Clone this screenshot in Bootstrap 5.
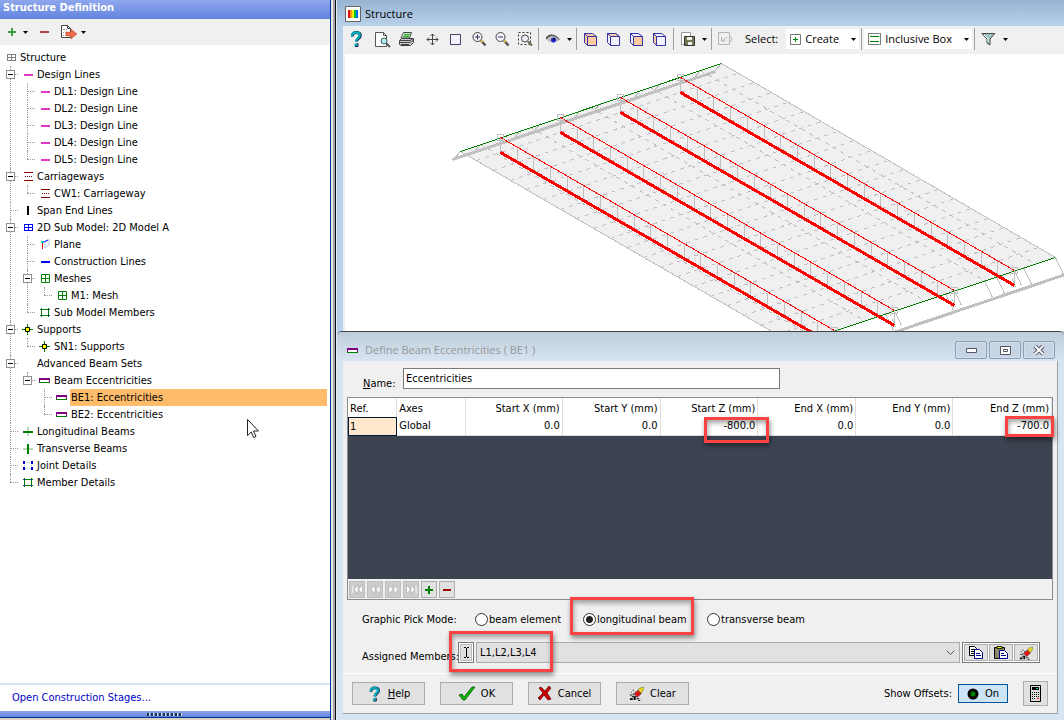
<!DOCTYPE html>
<html lang="en">
<head>
<meta charset="utf-8">
<meta name="viewport" content="width=device-width, initial-scale=1">
<title>Structure</title>
<link href="https://cdn.jsdelivr.net/npm/bootstrap@5.3.0/dist/css/bootstrap.min.css" rel="stylesheet">
<style>
  :root { --ui: "DejaVu Sans Condensed", "Liberation Sans", sans-serif; --title: "Open Sans", "Noto Sans", sans-serif; }
  body { font: 11px/17px var(--ui); color: #000; background: #f0f0f0; overflow: hidden; }
  button, input, select { font: inherit; color: inherit; border-radius: 0; }
  svg { display: block; flex: none; }

  /* definition pane */
  .def-pane { flex: 0 0 331px; background: #fff; border-right: 1px solid #039; }
  .def-title { height: 19px; padding: 0 3px; font-size: 11px; line-height: 15px; font-weight: 700; color: #fff; background: linear-gradient(#8ea6ec, #6384e0); margin: 0; }
  .def-tools { height: 26px; background: #f0f0f0; padding-left: 5px; }
  .flat { border: 0; background: none; padding: 0; display: flex; align-items: center; justify-content: center; }
  .tree, .tree ul { list-style: none; margin: 0; padding: 0; }
  .tree { padding: 4px 3px 0 2px; }
  .tree li li { position: relative; padding-left: 17px; }
  .node { display: flex; height: 17px; }
  .node > span { flex: 1; padding-left: 1px; white-space: nowrap; }
  .node.chosen > span { background: #ffbd6b; }
  .tree li li::before { content: ""; position: absolute; left: 8px; top: 0; bottom: 0; border-left: 1px dotted #999; }
  .tree li li:last-child::before { bottom: auto; height: 8px; }
  .tree li li::after { content: ""; position: absolute; left: 8px; top: 8px; width: 8px; border-top: 1px dotted #999; }
  .twist { position: absolute; z-index: 1; left: 4px; top: 4px; width: 9px; height: 9px; padding: 0; border: 1px solid #919191; background: linear-gradient(#000, #000) center / 5px 1px no-repeat #fff; }
  .pointer { position: absolute; left: 247px; top: 419px; z-index: 3; }
  .stages { border-top: 2px solid #d7e4f2; height: 28px; padding: 4px 12px; }
  .stages a { color: #0000c8; text-decoration: none; }
  .grip { height: 7px; border-bottom: 1px solid #039; background: linear-gradient(#8ea6ec, #6384e0); }
  .grip i { width: 36px; height: 3px; background: repeating-linear-gradient(90deg, #234 0 2px, #cdf 2px 3px, transparent 3px 4px); }
  .under { height: 2px; background: #e0d3bd; }
  .divider { flex: 0 0 6px; background: linear-gradient(90deg, #e9e9e9 0 2px, #a5a5a5 2px 4px, #111 4px 5px, #e4ecf5 5px); }

  /* structure window */
  .win { min-width: 0; background: #b9d1ea; }
  .win-title { height: 26px; padding: 2px 8px 0; background: linear-gradient(#98b4d2, #b9d1ea); font: 11px/24px var(--title); gap: 4px; }
  .win-in { margin-left: 6px; background: #f0f0f0; min-height: 0; }
  .tools { height: 28px; padding: 0 0 2px 1px; font: 11px/20px var(--title); }
  .tools .flat { width: 23px; height: 23px; flex: none; }
  .tools .caret { width: 10px; }
  .bar { width: 1px; height: 22px; background: #a0a0a0; margin: 0 2px; flex: none; }
  .pick { background: #fff; height: 20px; position: relative; }
  .pick select { appearance: none; border: 0; background: none; padding: 0 20px 0 4px; outline: 0; width: 100%; height: 20px; }
  .pick svg.drop { position: absolute; right: 3px; pointer-events: none; }
  .canvas { min-height: 0; margin-left: 2px; background: #fff; position: relative; overflow: hidden; }
  .canvas svg { width: 100%; height: 100%; position: absolute; }

  /* eccentricities dialog */
  .dlg { background: #d7e4f2; border-top: 1px solid #444; border-radius: 5px 5px 0 0; padding: 0 6px 6px; }
  .dlg-title { height: 29px; margin: 0 -6px; padding: 8px 9px 0 10px; background: linear-gradient(#bfcddb, #d7e4f2); color: #979797; border-radius: 5px 5px 0 0; font: 11px/20px var(--title); gap: 7px; }
  .cap { width: 32px; height: 18px; margin: 1px 0 0 2px; border: 1px solid #8c9db8; border-radius: 2px; background: #c6d4e3; padding: 0; display: flex; align-items: center; justify-content: center; box-shadow: inset 0 0 0 1px #d3dfeb; }
  .dlg-in { background: #f0f0f0; border-right: 1px solid #a0a0a0; border-bottom: 1px solid #a0a0a0; }
  .name-row { padding: 7px 4px 5px 20px; height: 36px; }
  .name-row label { width: 40px; padding-top: 7px; }
  .name-row input { flex: 0 1 377px; height: 21px; border: 1px solid #7a7a7a; padding: 0 2px; background: #fff; outline: 0; }
  .sheet { margin: 0 4px; border: 1px solid #8a8d93; background: #f0f0f0; }
  .sheet table { width: 100%; table-layout: fixed; border-collapse: separate; border-spacing: 0; background: #fff; }
  .sheet th, .sheet td { font-weight: 400; height: 19px; padding: 2px 2px 0; line-height: 17px; border-right: 1px solid #ddd; text-align: right; position: relative; white-space: nowrap; }
  .sheet td { border-bottom: 1px solid #ddd; padding-top: 0; line-height: 18px; }
  .sheet th:nth-child(-n+2), .sheet td:nth-child(-n+2) { text-align: left; padding-left: 2px; }
  .sheet td.here { background: #ffe8ce; border: 1px solid #001a33; padding: 0 1px; line-height: 17px; }
  .void { height: 143px; background: #3d4351; }
  .nav-row { height: 20px; gap: 2px; padding: 2px 1px 1px; }
  .nav-row button { width: 16px; height: 17px; border: 1px solid #adadad; background: #e1e1e1; padding: 0; display: flex; align-items: center; justify-content: center; }
  .nav-row button:disabled { background: #ccc; border-color: #bfbfbf; }
  .mark-box { position: absolute; border: 3px solid #f94343; box-shadow: 1px 3px 5px rgba(0,0,0,.45), inset 1px 3px 5px rgba(0,0,0,.35); pointer-events: none; z-index: 2; }
  .mark-sz { width: 65px; right: -12px; top: 0; height: 26px; }
  .mark-ez { width: 49px; right: -3px; top: -1px; height: 21px; }
  .mark-lb { inset: -14px 13px -7px -13px; }
  .mark-am { left: -9px; top: -11px; width: 104px; height: 41px; }
  .mode-row { padding: 0 0 3px 19px; height: 42px; }
  .mode-row .cue { width: 113px; }
  .mode { gap: 1px; position: relative; width: 124px; }
  .mode:nth-child(2) { width: 108px; }
  .mode input { appearance: none; width: 13px; height: 13px; margin: 0; border: 1px solid #333; border-radius: 50%; background: #fff; }
  .mode input:checked { background: radial-gradient(circle, #222 0 3px, #fff 4px); }
  .member-row { padding: 0 17px 0 19px; height: 31px; }
  .member-row .cue { flex: none; width: 96px; padding-top: 6px; white-space: nowrap; }
  .members { position: relative; min-width: 0; }
  .members .edit { width: 16px; height: 21px; border: 1px solid #777; background: #e1e1e1; padding: 0; display: flex; align-items: center; justify-content: center; box-shadow: inset 0 0 0 1px #fff, inset 0 0 0 2px #bbb; }
  .members select { appearance: none; height: 21px; min-width: 0; margin: 0 2px; border: 1px solid #adadad; padding: 0 3px; color: #000; background: url("data:image/svg+xml,%3Csvg xmlns='http://www.w3.org/2000/svg' width='9' height='6'%3E%3Cpath d='M.5 .5l4 4 4-4' fill='none' stroke='%23555'/%3E%3C/svg%3E") right 4px center no-repeat #e1e1e1; }
  .trio { border: 1px solid #7a7a7a; height: 21px; padding: 1px; gap: 1px; background: #fff; }
  .trio button { width: 24px; height: 17px; border: 1px solid #adadad; background: #e1e1e1; padding: 0; display: flex; align-items: center; justify-content: center; }
  .foot { border-top: 1px solid #fff; height: 40px; padding: 0 9px; gap: 15px; }
  .push { width: 73px; height: 23px; border: 1px solid #adadad; background: #e1e1e1; padding: 0; display: flex; align-items: center; justify-content: center; gap: 6px; }
  .push.on { width: 50px; height: 19px; background: #cce4f7; border-color: #005499; }
  .push.calc { width: 25px; height: 25px; }
  .offsets { gap: 6px; }
</style>
</head>
<body class="vh-100 d-flex">

<svg width="0" height="0" class="position-absolute" aria-hidden="true">
  <defs>
    <symbol id="t-root" viewBox="0 0 17 17"><path d="M5 5.500h9M5 8.500h9M5 11.500h9M5.500 5v7M9.500 5v7M13.500 5v7" stroke="#808080" fill="none"/></symbol>
    <symbol id="t-model" viewBox="0 0 17 17"><path d="M5 5.500h9M5 8.500h9M5 11.500h9M5.500 5v7M9.500 5v7M13.500 5v7" stroke="#00f" fill="none"/></symbol>
    <symbol id="t-dl" viewBox="0 0 17 17"><path d="M5 8h9v2H5z" fill="#e038c0"/></symbol>
    <symbol id="t-cons" viewBox="0 0 17 17"><path d="M5 8h9v2H5z" fill="#00f"/></symbol>
    <symbol id="t-cw" viewBox="0 0 17 17"><path d="M5 4.500h9M5 12.500h9M6 8.500h1m1 0h1m1 0h1m1 0h1" stroke="#800000"/></symbol>
    <symbol id="t-span" viewBox="0 0 17 17"><path d="M8 4h2v9H8z"/></symbol>
    <symbol id="t-plane" viewBox="0 0 17 17"><path d="M6.500 7v6" stroke="red"/><path d="M9 12l4-3V3.500L9 5.500z" stroke="#a8ccee" fill="none"/><path d="M8 6l4-2" stroke="#00f"/><path d="M5 5h3v2H5z" fill="#00c8d8"/></symbol>
    <symbol id="t-mesh" viewBox="0 0 17 17"><path d="M5.500 4.500h8v8h-8zM9.500 4v9M5 8.500h9" fill="none" stroke="#008000"/></symbol>
    <symbol id="t-mem" viewBox="0 0 17 17"><path d="M5.500 4v9M12.500 4v9M4 5.500h10M4 11.500h10" fill="none" stroke="#008000"/><path d="M5 5h1v1H5zM12 5h1v1h-1zM5 11h1v1H5zM12 11h1v1h-1z" fill="#00c"/></symbol>
    <symbol id="t-joint" viewBox="0 0 17 17"><path d="M5.500 4v9M12.500 4v9M4 5.500h10M4 11.500h10" fill="none" stroke="#9cd" stroke-dasharray="1 1"/><path d="M4 4h2v3H4zM12 4h2v3h-2zM4 10h2v3H4zM12 10h2v3h-2z" fill="#00c"/></symbol>
    <symbol id="t-sup" viewBox="0 0 17 17"><path d="M3 8.500h11M8.500 3v11" stroke="#008000"/><path d="M6.500 6.500h4v4h-4z" fill="#ff0" stroke="#000"/></symbol>
    <symbol id="t-none" viewBox="0 0 17 17"></symbol>
    <symbol id="t-ecc" viewBox="0 0 17 17"><path d="M3 6h11v2H3zM3 8h1v2H3zM13 8h1v2h-1z" fill="#800080"/><path d="M4 8h9v2H4z" fill="#fff"/><path d="M3 10h11v1H3z" fill="#008000"/></symbol>
    <symbol id="t-long" viewBox="0 0 17 17"><path d="M8 4h2v9H8z" fill="#b8dcb8"/><path d="M4 8h10v2H4z" fill="#008000"/></symbol>
    <symbol id="t-trans" viewBox="0 0 17 17"><path d="M4 8h10v2H4z" fill="#b8dcb8"/><path d="M8 4h2v10H8z" fill="#008000"/></symbol>
    <symbol id="drop" viewBox="0 0 5 3"><path d="M0 0h5L2.500 3z"/></symbol>
    <symbol id="help" viewBox="0 0 16 16"><path d="M4.500 5.500C4 2.500 6 1.500 8.300 1.500c3 0 4 1.400 4 3 0 2.800-3.600 2.800-3.800 6" fill="none" stroke="#124" stroke-width="3"/><path d="M4 5.500C3.700 2.300 5.700 1.500 8 1.500c2.700 0 3.700 1.400 3.700 3C11.700 7 8.200 7.300 8 10.500" fill="none" stroke="#0ab" stroke-width="2.400"/><path d="M6.500 12.500h3v3h-3z" fill="#0ab"/><path d="M9 12.500h1v3H7" fill="none" stroke="#124"/></symbol>
    <symbol id="lens" viewBox="0 0 16 16"><circle cx="6.500" cy="6" r="4.500" fill="#f4f4ff" stroke="#444"/><path d="M10 9.500l4.500 5" stroke="#555" stroke-width="2.500"/><path d="M10 9.500l1.500 1.500" stroke="#dc3" stroke-width="2"/></symbol>
    <symbol id="brush" viewBox="0 0 16 16"><path d="M15.500 1L11 2.500 9 6l3 3 4-6z" fill="#e8d820" stroke="#553" stroke-width=".5"/><path d="M9.500 4.500l3.500 3.500-4 4-3.500-3.500z" fill="#e01818" stroke="#400" stroke-width=".5"/><path d="M2 6h1v1H2zM4 4h1v1H4zM1 9h2v1H1zM3 11h5v1H3zM1 13h3v2H1zM5 12h2v3H5zM8 13h3v1H8zM10 15h2v1h-2zM4 8h1v2H4zM6 6h1v1H6z"/></symbol>
    <symbol id="eccbar" viewBox="0 0 11 5"><path d="M0 0h11v2H0zM0 2h1v2H0zM10 2h1v2h-1z" fill="#800080"/><path d="M1 2h9v2H1z" fill="#fff"/><path d="M0 4h11v1H0z" fill="#008000"/></symbol>
  </defs>
</svg>

<aside class="def-pane d-flex flex-column">
  <h1 class="def-title">Structure Definition</h1>
  <div class="def-tools d-flex align-items-center">
    <button class="flat" aria-label="Add"><svg width="14" height="9"><path d="M3 4h8M7 0v8" stroke="#3c9d42" stroke-width="2"/></svg></button>
    <button class="flat ms-1" aria-label="Add menu"><svg width="5" height="3"><use href="#drop"/></svg></button>
    <button class="flat ms-2 ps-1" aria-label="Remove"><svg width="9" height="4"><path d="M0 1h9v2H0z" fill="#a8444c"/></svg></button>
    <button class="flat ms-2 ps-1" aria-label="Export"><svg width="16" height="16"><path d="M.5 1.500h6l3 3v9h-9z" fill="#fff" stroke="#444"/><path d="M6.500 1.500v3h3" fill="none" stroke="#444"/><path d="M2 5.500h2m1 0h1M2 8.500h1m1 0h1M2 11.500h1m1 0h1" stroke="#999"/><path d="M5 8h5V5l6 5-6 5v-3H5z" fill="#ee6a4a" stroke="#c6523a" stroke-width=".5"/></svg></button>
    <button class="flat ms-1" aria-label="Export menu"><svg width="5" height="3"><use href="#drop"/></svg></button>
  </div>
  <ul class="tree flex-grow-1">
    <li><div class="node"><svg width="17" height="17"><use href="#t-root"/></svg><span>Structure</span></div>
      <ul>
        <li><button class="twist" aria-label="Collapse"></button><div class="node"><svg width="17" height="17"><use href="#t-dl"/></svg><span>Design Lines</span></div>
          <ul>
            <li><div class="node"><svg width="17" height="17"><use href="#t-dl"/></svg><span>DL1: Design Line</span></div></li>
            <li><div class="node"><svg width="17" height="17"><use href="#t-dl"/></svg><span>DL2: Design Line</span></div></li>
            <li><div class="node"><svg width="17" height="17"><use href="#t-dl"/></svg><span>DL3: Design Line</span></div></li>
            <li><div class="node"><svg width="17" height="17"><use href="#t-dl"/></svg><span>DL4: Design Line</span></div></li>
            <li><div class="node"><svg width="17" height="17"><use href="#t-dl"/></svg><span>DL5: Design Line</span></div></li>
          </ul></li>
        <li><button class="twist" aria-label="Collapse"></button><div class="node"><svg width="17" height="17"><use href="#t-cw"/></svg><span>Carriageways</span></div>
          <ul><li><div class="node"><svg width="17" height="17"><use href="#t-cw"/></svg><span>CW1: Carriageway</span></div></li></ul></li>
        <li><div class="node"><svg width="17" height="17"><use href="#t-span"/></svg><span>Span End Lines</span></div></li>
        <li><button class="twist" aria-label="Collapse"></button><div class="node"><svg width="17" height="17"><use href="#t-model"/></svg><span>2D Sub Model: 2D Model A</span></div>
          <ul>
            <li><div class="node"><svg width="17" height="17"><use href="#t-plane"/></svg><span>Plane</span></div></li>
            <li><div class="node"><svg width="17" height="17"><use href="#t-cons"/></svg><span>Construction Lines</span></div></li>
            <li><button class="twist" aria-label="Collapse"></button><div class="node"><svg width="17" height="17"><use href="#t-mesh"/></svg><span>Meshes</span></div>
              <ul><li><div class="node"><svg width="17" height="17"><use href="#t-mesh"/></svg><span>M1: Mesh</span></div></li></ul></li>
            <li><div class="node"><svg width="17" height="17"><use href="#t-mem"/></svg><span>Sub Model Members</span></div></li>
          </ul></li>
        <li><button class="twist" aria-label="Collapse"></button><div class="node"><svg width="17" height="17"><use href="#t-sup"/></svg><span>Supports</span></div>
          <ul><li><div class="node"><svg width="17" height="17"><use href="#t-sup"/></svg><span>SN1: Supports</span></div></li></ul></li>
        <li><button class="twist" aria-label="Collapse"></button><div class="node"><svg width="17" height="17"><use href="#t-none"/></svg><span>Advanced Beam Sets</span></div>
          <ul><li><button class="twist" aria-label="Collapse"></button><div class="node"><svg width="17" height="17"><use href="#t-ecc"/></svg><span>Beam Eccentricities</span></div>
            <ul>
              <li><div class="node chosen"><svg width="17" height="17"><use href="#t-ecc"/></svg><span>BE1: Eccentricities</span></div></li>
              <li><div class="node"><svg width="17" height="17"><use href="#t-ecc"/></svg><span>BE2: Eccentricities</span></div></li>
            </ul></li></ul></li>
        <li><div class="node"><svg width="17" height="17"><use href="#t-long"/></svg><span>Longitudinal Beams</span></div></li>
        <li><div class="node"><svg width="17" height="17"><use href="#t-trans"/></svg><span>Transverse Beams</span></div></li>
        <li><div class="node"><svg width="17" height="17"><use href="#t-joint"/></svg><span>Joint Details</span></div></li>
        <li><div class="node"><svg width="17" height="17"><use href="#t-mem"/></svg><span>Member Details</span></div></li>
      </ul></li>
  </ul>
  <svg class="pointer" width="13" height="20"><path d="M.5.500v16l3.700-3.500 2.500 5.500 2.300-1-2.500-5.500h5z" fill="#fff" stroke="#222"/></svg>
  <div class="stages"><a href="#">Open Construction Stages...</a></div>
  <div class="grip d-flex justify-content-center align-items-center"><i></i></div>
  <div class="under"></div>
</aside>
<div class="divider"></div>

<main class="win flex-grow-1 d-flex flex-column">
  <header class="win-title d-flex align-items-center">
    <svg width="16" height="16"><path d="M.5.500h15v15H.500z" fill="#fff" stroke="#666"/><path d="M3 4h2v8H3z" fill="#e01010"/><path d="M5 4h2v8H5z" fill="#f90"/><path d="M7 4h2v8H7z" fill="#ee0"/><path d="M9 4h2v8H9z" fill="#0c3"/><path d="M11 4h2v8h-2z" fill="#06e"/></svg>
    <span>Structure</span>
  </header>
  <div class="win-in flex-grow-1 d-flex flex-column">
    <div class="tools d-flex align-items-center">
      <button class="flat" aria-label="Help"><svg width="16" height="16"><use href="#help"/></svg></button>
      <button class="flat ms-1" aria-label="Preview"><svg width="17" height="17"><path d="M1.500 1.500h8l3 3v11h-11z" fill="#fff" stroke="#555"/><path d="M9.500 1.500v3h3" fill="none" stroke="#555"/><circle cx="10" cy="10" r="3" fill="#aee" stroke="#555"/><path d="M12 12l4 4" stroke="#555" stroke-width="2"/></svg></button>
      <button class="flat" aria-label="Print"><svg width="16" height="16"><path d="M5.500 1.500h8L11.500 7H3z" fill="#fff" stroke="#444"/><path d="M6 3.500h6M5 5.500h6" stroke="#2a2" stroke-width="1.500"/><path d="M3.500 7.500h12v4l-3 3h-10l-1-1v-4z" fill="#ccc" stroke="#444"/><path d="M2 9.500h10l3-2M2 11.500h10l3-2M3 13.500h8" stroke="#444" fill="none"/></svg></button>
      <button class="flat ms-1" aria-label="Pan"><svg width="13" height="13" fill="none" stroke="#444"><path d="M6.500 1v11M1 6.500h11M4.500 3l2-2 2 2M4.500 10l2 2 2-2M3 4.500l-2 2 2 2M10 4.500l2 2-2 2"/></svg></button>
      <button class="flat" aria-label="Fit"><svg width="13" height="13"><path d="M1.500 1.500h10v10h-10z" fill="#f2f2ff" stroke="#446"/></svg></button>
      <button class="flat" aria-label="Zoom in"><svg width="16" height="16"><use href="#lens"/><path d="M4 6h5M6.500 3.500v5" stroke="#335"/></svg></button>
      <button class="flat" aria-label="Zoom out"><svg width="16" height="16"><use href="#lens"/><path d="M4 6h5" stroke="#335"/></svg></button>
      <button class="flat" aria-label="Zoom window"><svg width="16" height="16"><path d="M1.500 1.500h12v12h-12z" fill="none" stroke="#333" stroke-dasharray="2 2"/><circle cx="8" cy="7.500" r="3.500" fill="#eef" stroke="#444"/><path d="M11 10.500l4 4" stroke="#664" stroke-width="2"/></svg></button>
      <span class="bar"></span>
      <button class="flat" aria-label="Visibility"><svg width="14" height="10"><path d="M0 5c3-5 9-5 13 1" fill="none" stroke="#555" stroke-width="2"/><path d="M1 6c3 3 8 3 12 0-3-4-8-5-12 0z" fill="#bbb"/><circle cx="7.500" cy="6" r="2.500" fill="#22c"/><circle cx="8" cy="5" r="1" fill="#113"/></svg></button>
      <button class="flat caret" aria-label="Visibility menu"><svg width="5" height="3"><use href="#drop"/></svg></button>
      <span class="bar"></span>
      <button class="flat" aria-label="Solid view"><svg width="13" height="13" stroke="#33a"><path d="M.5.500h8l4 3v9h-9l-3-3z" fill="#fcc9a0"/><path d="M.5.500l3 3h9M3.500 3.500v9" fill="none"/></svg></button>
      <button class="flat" aria-label="Top view"><svg width="13" height="13" stroke="#33a"><path d="M.5.500h8l4 3v9h-9l-3-3z" fill="#f2f2ff"/><path d="M.5.500h8l4 3h-9z" fill="#fcc9a0"/><path d="M3.500 3.500v9" fill="none"/></svg></button>
      <button class="flat" aria-label="Front view"><svg width="13" height="13" stroke="#33a"><path d="M.5.500h8l4 3v9h-9l-3-3z" fill="#f2f2ff"/><path d="M3.500 3.500h9v9h-9z" fill="#fcc9a0"/><path d="M.5.500l3 3" fill="none"/></svg></button>
      <button class="flat" aria-label="Side view"><svg width="13" height="13" stroke="#33a"><path d="M.5.500h8l4 3v9h-9l-3-3z" fill="#f2f2ff"/><path d="M.5.500l3 3v9l-3-3z" fill="#fcc9a0"/><path d="M3.500 3.500h9" fill="none"/></svg></button>
      <span class="bar"></span>
      <button class="flat" aria-label="Save view"><svg width="16" height="16"><path d="M1.500 1.500h9v12h-9z" fill="#fff" stroke="#999"/><path d="M4.500 5.500h10v9h-10z" fill="#775" stroke="#333"/><path d="M7 6h5v3H7zM8 11h4v3H8z" fill="#eee"/></svg></button>
      <button class="flat caret" aria-label="Save menu"><svg width="5" height="3"><use href="#drop"/></svg></button>
      <span class="bar"></span>
      <button class="flat" disabled aria-label="Undo"><svg width="15" height="14" fill="none" stroke="#b4b4b4"><path d="M.5.500h11v12H.500zM11.500 3.500c3 2 3 5 0 7M3.500 5v4h4M4 9l5-4"/></svg></button>
      <label for="sel-action" class="ms-2 me-2">Select:</label>
      <div class="pick d-flex align-items-center ps-1"><svg width="11" height="11"><path d="M.5.500h10v10H.500z" fill="#fff" stroke="#777"/><path d="M3 5.500h5M5.500 3v5" stroke="#008000"/></svg><select id="sel-action"><option>Create</option></select><svg class="drop" width="5" height="3"><use href="#drop"/></svg></div>
      <span class="bar"></span>
      <div class="pick d-flex align-items-center ps-1"><svg width="13" height="12"><path d="M.5.500h12v11H.500z" fill="none" stroke="#000" stroke-dasharray="1 1"/><path d="M2 3.500h9M2 8.500h9" stroke="#008000"/></svg><select id="sel-shape" aria-label="Selection shape"><option>Inclusive Box</option></select><svg class="drop" width="5" height="3"><use href="#drop"/></svg></div>
      <span class="bar"></span>
      <button class="flat" aria-label="Filter"><svg width="15" height="14"><path d="M.8 1.500h13L9 7v6l-3-2V7z" fill="#9cc8c8" stroke="#444"/><path d="M3 3l4 4v3" stroke="#fff" fill="none"/></svg></button>
      <button class="flat caret" aria-label="Filter menu"><svg width="5" height="3"><use href="#drop"/></svg></button>
    </div>
    <div class="canvas flex-grow-1"><svg id="scene" viewBox="345 54 719 277" preserveAspectRatio="xMinYMin slice" role="img" aria-label="Bridge deck grillage"></svg></div>
  </div>

  <section class="dlg">
    <header class="dlg-title d-flex align-items-start">
      <svg width="11" height="5" class="mt-2"><use href="#eccbar"/></svg>
      <span class="flex-grow-1">Define Beam Eccentricities ( BE1 )</span>
      <div class="d-flex">
        <button class="cap" aria-label="Minimise"><svg width="11" height="5"><path d="M.5.500h10v4H.500z" fill="#fff" stroke="#556"/></svg></button>
        <button class="cap" aria-label="Maximise"><svg width="11" height="9"><path d="M.5.500h10v8H.500zM3.500 3.500h4v2h-4z" fill="#fff" stroke="#556"/></svg></button>
        <button class="cap" aria-label="Close"><svg width="12" height="10"><path d="M2 1l8 8M10 1L2 9" stroke="#556" stroke-width="4"/><path d="M2 1l8 8M10 1L2 9" stroke="#fff" stroke-width="2"/></svg></button>
      </div>
    </header>
    <div class="dlg-in">
      <div class="name-row d-flex">
        <label for="set-name"><u>N</u>ame:</label>
        <input id="set-name" type="text" value="Eccentricities">
      </div>
      <div class="sheet">
        <table>
          <colgroup><col style="width:7%"><col style="width:9.700%"><col style="width:13.800%"><col style="width:13.900%"><col style="width:13.900%"><col style="width:13.900%"><col style="width:13.800%"><col style="width:14%"></colgroup>
          <thead><tr><th>Ref.</th><th>Axes</th><th>Start X (mm)</th><th>Start Y (mm)</th><th>Start Z (mm)</th><th>End X (mm)</th><th>End Y (mm)</th><th>End Z (mm)</th></tr></thead>
          <tbody><tr><td class="here">1</td><td>Global</td><td>0.0</td><td>0.0</td><td>-800.0<span class="mark-box mark-sz"></span></td><td>0.0</td><td>0.0</td><td>-700.0<span class="mark-box mark-ez"></span></td></tr></tbody>
        </table>
        <div class="void"></div>
        <div class="nav-row d-flex">
          <button disabled aria-label="First"><svg width="11" height="9" fill="#fff" stroke="#999" stroke-width=".5"><path d="M0 0h2v9H0zM6 0v9L2 4.500zM10.500 0v9l-4-4.500z"/></svg></button>
          <button disabled aria-label="Previous"><svg width="11" height="9" fill="#fff" stroke="#999" stroke-width=".5"><path d="M5 0v9L1 4.500zM10 0v9L6 4.500z"/></svg></button>
          <button disabled aria-label="Next"><svg width="11" height="9" fill="#fff" stroke="#999" stroke-width=".5"><path d="M1 0v9l4-4.500zM6 0v9l4-4.500z"/></svg></button>
          <button disabled aria-label="Last"><svg width="11" height="9" fill="#fff" stroke="#999" stroke-width=".5"><path d="M.5 0v9l4-4.500zM5 0v9l4-4.500zM9 0h2v9H9z"/></svg></button>
          <button aria-label="Add row"><svg width="8" height="8"><path d="M0 4h8M4 0v8" stroke="#008000" stroke-width="2"/></svg></button>
          <button aria-label="Delete row"><svg width="8" height="2"><path d="M0 0h8v2H0z" fill="#900"/></svg></button>
        </div>
      </div>
      <div class="mode-row d-flex align-items-center">
        <span class="cue">Graphic Pick Mode:</span>
        <div class="mode d-flex align-items-center"><input type="radio" name="mode" id="m1"><label for="m1">beam element</label></div>
        <div class="mode d-flex align-items-center"><input type="radio" name="mode" id="m2" checked><label for="m2">longitudinal beam</label><span class="mark-box mark-lb"></span></div>
        <div class="mode d-flex align-items-center"><input type="radio" name="mode" id="m3"><label for="m3">transverse beam</label></div>
      </div>
      <div class="member-row d-flex">
        <label class="cue" for="members">Assigned Members:</label>
        <div class="members d-flex flex-grow-1 align-items-start">
          <button class="edit" aria-label="Edit members"><svg width="7" height="11"><path d="M1 .5h2M4 .5h2M3.500 1v9M1 10.500h2M4 10.500h2" stroke="#000"/></svg></button>
          <select id="members" class="flex-grow-1"><option>L1,L2,L3,L4</option></select>
          <span class="mark-box mark-am"></span>
        </div>
        <div class="trio d-flex">
          <button aria-label="Copy"><svg width="14" height="13"><path d="M.5.500h5l2 2v7h-7z" fill="#fff" stroke="#000"/><path d="M2 3.500h3M2 5.500h3M2 7.500h3" stroke="#000"/><path d="M5.500 3.500h5l3 3v6h-8z" fill="#fff" stroke="#008"/><path d="M7 7.500h4M7 9.500h5" stroke="#008"/></svg></button>
          <button aria-label="Paste"><svg width="14" height="13"><path d="M.5 1.500h10v11H.500z" fill="#886" stroke="#000"/><path d="M3 .5h5v2H3z" fill="#ee0" stroke="#220"/><path d="M5.500 4.500h5l3 3v5h-8z" fill="#fff" stroke="#008"/><path d="M7 7.500h3M7 9.500h5" stroke="#008"/></svg></button>
          <button aria-label="Clear members"><svg width="14" height="14"><use href="#brush"/></svg></button>
        </div>
      </div>
      <div class="foot d-flex align-items-center">
        <button class="push"><svg width="15" height="16"><use href="#help"/></svg><span><u>H</u>elp</span></button>
        <button class="push"><svg width="17" height="15"><path d="M1 9l3-1 2 3 8-10h3L7 14H5z" fill="#0b0" stroke="#040" stroke-width=".7"/></svg><span>OK</span></button>
        <button class="push"><svg width="14" height="15"><path d="M1 2l2-1 4 4 4-5 2 2-4 5 4 6-3 1-4-5-4 5-2-2 5-5z" fill="#c00" stroke="#500" stroke-width=".7"/></svg><span>Cancel</span></button>
        <button class="push"><svg width="15" height="15"><use href="#brush"/></svg><span>Clear</span></button>
        <div class="offsets d-flex align-items-center ms-auto">
          <span class="text-nowrap" id="off-lab">Show Offsets:</span>
          <button class="push on" aria-labelledby="off-lab"><svg width="12" height="12"><circle cx="6" cy="6" r="4" fill="#008000" stroke="#000" stroke-width="3"/></svg><span>On</span></button>
        </div>
        <button class="push calc" aria-label="Calculator"><svg width="11" height="17"><path d="M.5.500h10v16H.500z" fill="#ddd" stroke="#000"/><path d="M2 2h7v3H2z"/><path d="M6 3h2v1H6z" fill="#0cc"/><path d="M2 7.500h7M2 9.500h7M2 11.500h7M2 13.500h4" stroke="#000" stroke-dasharray="1 1"/><path d="M7 13h2v1H7z" fill="red"/></svg></button>
      </div>
    </div>
  </section>
</main>

<script src="https://cdn.jsdelivr.net/npm/bootstrap@5.3.0/dist/js/bootstrap.bundle.min.js"></script>
<script>
  // Oblique view of the deck: u runs along the span, v across it.
  const origin = [460, 151], U = [334, 193.5], V = [261, -87.5], bays = 20;
  const at = (u, v, dy = 0) => [origin[0] + U[0]*u + V[0]*v, origin[1] + U[1]*u + V[1]*v + dy];
  const out = [];
  const line = (a, b, stroke, w = 1, extra = '') =>
    out.push(`<path d="M${a.map(n => Math.floor(n) + .5)}L${b.map(n => Math.floor(n) + .5)}" stroke="${stroke}" stroke-width="${w}" ${extra}/>`);
  const grey = '#c0c0c0', dash = 'stroke-dasharray="4 5"';
  const beams = [.155, .385, .615, .845];

  out.push(`<polygon points="${[at(0,0), at(1,0), at(1,1), at(0,1)].join(' ')}" fill="#f0f0f0"/>`);
  for (let i = 1; i < bays; i++) line(at(i/bays, 0), at(i/bays, 1), grey, 1, dash);
  for (const v of [.078, .27, .5, .73, .922]) line(at(0, v), at(1, v), grey, 1, dash);
  line(at(0,0), at(1,0), grey); line(at(0,1), at(1,1), grey);

  // Supports below each end of the deck
  line([452,159], [715,71], grey, 3);
  line([893,332], [1068,273], grey, 3);
  for (const v of [0, .08, .23, .31, .46, .54, .69, .77, .92, 1]) { const p = at(0, v); line(p, [p[0]-7, p[1]+8], grey); }
  for (const v of [.12, .35, .58, .73, .775, .88, 1]) { const p = at(1, v); line(p, [p[0]+8, p[1]+17], grey); }
  for (const v of beams) { const p = at(1, v); line(p, [p[0]+7, p[1]+15], grey); line([p[0]-5, p[1]+2], [p[0]+1, p[1]+17], grey, 1, 'stroke-dasharray="4 3"'); }
  line(at(0,0), at(0,1), '#008000'); line(at(1,0), at(1,1), '#008000');

  for (const v of beams) {
    for (let i = 0; i <= bays; i++) line(at(i/bays, v), at(i/bays, v, 15), grey);
    line(at(0,v), at(1,v), '#f00');
    line(at(0,v,15), at(1,v,15), '#f00', 3);
    for (const u of [0, 1]) { const [x, y] = at(u, v).map(Math.floor); out.push(`<rect x="${x-2.5}" y="${y-2.5}" width="6" height="6" stroke="${grey}" fill="none"/>`); }
  }
  document.getElementById('scene').innerHTML = `<g fill="none" shape-rendering="crispEdges">${out.join('')}</g>`;
</script>
</body>
</html>
